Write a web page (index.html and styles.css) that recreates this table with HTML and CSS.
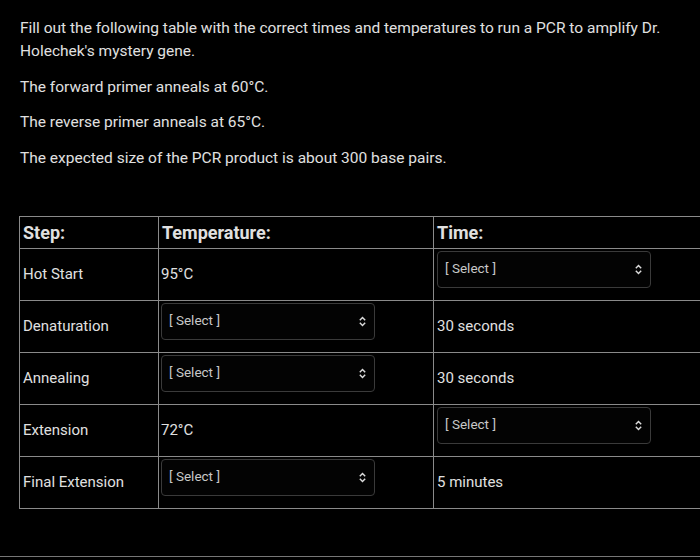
FILE: index.html
```html
<!DOCTYPE html>
<html>
<head>
<meta charset="utf-8">
<link rel="stylesheet" href="styles.css">
</head>
<body>
<div class="page">
  <div class="question">
    <p>Fill out the following table with the correct times and temperatures to run a PCR to amplify Dr. Holechek's mystery gene.</p>
    <p>The forward primer anneals at 60°C.</p>
    <p>The reverse primer anneals at 65°C.</p>
    <p>The expected size of the PCR product is about 300 base pairs.</p>
  </div>
  <table class="pcr">
    <thead>
      <tr><th class="c1">Step:</th><th class="c2">Temperature:</th><th class="c3">Time:</th></tr>
    </thead>
    <tbody>
      <tr>
        <td>Hot Start</td>
        <td>95°C</td>
        <td><div class="sel"><span>[ Select ]</span><svg class="arr" viewBox="0 0 10 12" width="9" height="11"><path d="M2 4.5 L5 1.5 L8 4.5 M2 7.5 L5 10.5 L8 7.5" fill="none" stroke="#ddd" stroke-width="1.6"/></svg></div></td>
      </tr>
      <tr>
        <td>Denaturation</td>
        <td><div class="sel"><span>[ Select ]</span><svg class="arr" viewBox="0 0 10 12" width="9" height="11"><path d="M2 4.5 L5 1.5 L8 4.5 M2 7.5 L5 10.5 L8 7.5" fill="none" stroke="#ddd" stroke-width="1.6"/></svg></div></td>
        <td>30 seconds</td>
      </tr>
      <tr>
        <td>Annealing</td>
        <td><div class="sel"><span>[ Select ]</span><svg class="arr" viewBox="0 0 10 12" width="9" height="11"><path d="M2 4.5 L5 1.5 L8 4.5 M2 7.5 L5 10.5 L8 7.5" fill="none" stroke="#ddd" stroke-width="1.6"/></svg></div></td>
        <td>30 seconds</td>
      </tr>
      <tr>
        <td>Extension</td>
        <td>72°C</td>
        <td><div class="sel"><span>[ Select ]</span><svg class="arr" viewBox="0 0 10 12" width="9" height="11"><path d="M2 4.5 L5 1.5 L8 4.5 M2 7.5 L5 10.5 L8 7.5" fill="none" stroke="#ddd" stroke-width="1.6"/></svg></div></td>
      </tr>
      <tr>
        <td>Final Extension</td>
        <td><div class="sel"><span>[ Select ]</span><svg class="arr" viewBox="0 0 10 12" width="9" height="11"><path d="M2 4.5 L5 1.5 L8 4.5 M2 7.5 L5 10.5 L8 7.5" fill="none" stroke="#ddd" stroke-width="1.6"/></svg></div></td>
        <td>5 minutes</td>
      </tr>
    </tbody>
  </table>
  <div class="footer-rule"></div>
</div>
</body>
</html>
```

FILE: styles.css
```css
html, body {
  margin: 0;
  padding: 0;
  background: #000;
  overflow: hidden;
}
body {
  width: 700px;
  height: 560px;
  font-family: Roboto, "Liberation Sans", sans-serif;
  color: #e0e0e0;
}
.page {
  padding: 17px 0 0 19px;
}
.question {
  width: 672px;
  padding-left: 1px;
}
.question p {
  margin: 0 0 12.5px;
  font-size: 15.5px;
  line-height: 23px;
}
.pcr {
  margin-top: 46px;
  border-collapse: collapse;
  width: 760px;
}
.pcr th, .pcr td {
  border: 1px solid #8a8a8a;
  text-align: left;
}
.pcr th {
  font-size: 18px;
  font-weight: 700;
  height: 31px;
  padding: 0 3px;
  vertical-align: middle;
}
.pcr .c1 { width: 132px; }
.pcr .c2 { width: 268px; }
.pcr td {
  font-size: 15px;
  padding: 2px 3px;
  height: 47px;
  vertical-align: middle;
}
.pcr td:nth-child(2) { padding-left: 2px; }
.sel {
  height: 35px;
  border: 1px solid #3a3a3a;
  border-radius: 4px;
  background: #030303;
  margin-bottom: 10px;
  display: flex;
  align-items: center;
  justify-content: space-between;
  padding: 0 7px 0 7px;
  box-sizing: content-box;
  width: 198px;
  font-size: 13.5px;
  color: #c8c8c8;
}
.sel span { margin-top: -3px; }
.arr { display: block; }
.footer-rule {
  margin-top: 47px;
  margin-left: -19px;
  border-top: 1px solid #777;
}
```
